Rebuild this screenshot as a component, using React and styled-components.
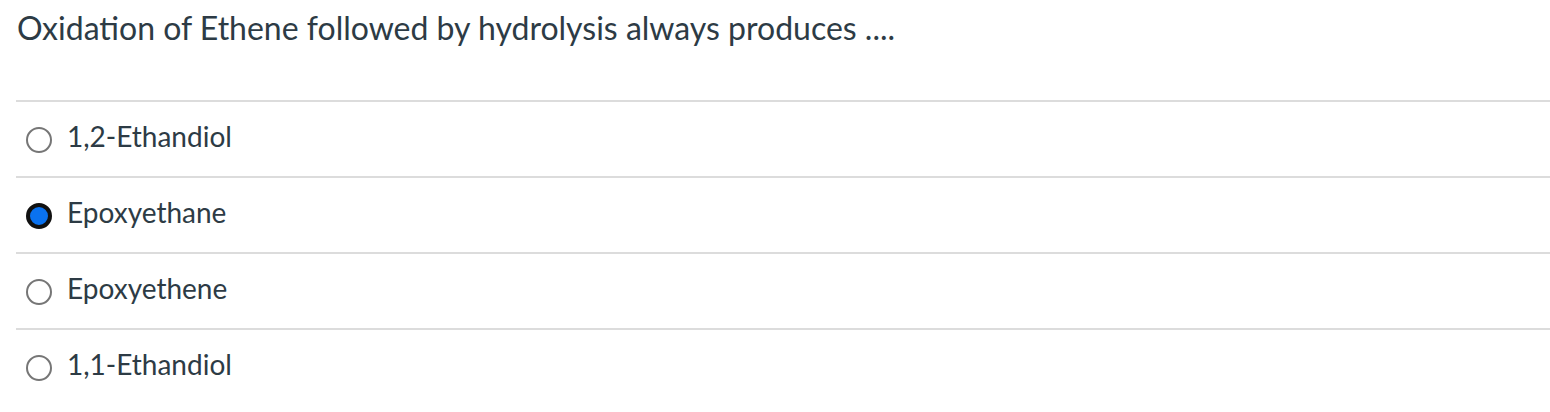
import styled, { createGlobalStyle } from 'styled-components'

const GlobalStyle = createGlobalStyle`
  body {
    margin: 0;
    background: #fff;
    font-family: Lato, "Open Sans", sans-serif;
    color: #2d3b45;
  }
`

const Page = styled.div`
  padding-left: 16px;
`

const Question = styled.div`
  font-size: 32px;
  line-height: 36px;
  padding: 10px 0 0 1px;
  height: 100px;
  box-sizing: border-box;
`

const Answers = styled.div`
  display: flex;
  flex-direction: column;
`

const Answer = styled.label`
  display: flex;
  align-items: center;
  height: 76px;
  border-top: 2px solid #dcdcdc;
  box-sizing: border-box;
  padding-left: 10px;
  font-size: 28px;
  gap: 15px;
`

const Radio = styled.span`
  width: 26px;
  height: 26px;
  border-radius: 50%;
  box-sizing: border-box;
  margin-top: 2px;
  border: ${p => (p.checked ? '4px solid #111' : '2px solid #767676')};
  background: ${p => (p.checked ? '#0a72f0' : '#fff')};
`

const Label = styled.span`
  padding-bottom: 6px;
`

const answers = [
  { text: '1,2-Ethandiol' },
  { text: 'Epoxyethane', checked: true },
  { text: 'Epoxyethene' },
  { text: '1,1-Ethandiol' },
]

const App = () => {
  return (
    <Page>
      <GlobalStyle />
      <Question>Oxidation of Ethene followed by hydrolysis always produces ....</Question>
      <Answers>
        {answers.map(a => (
          <Answer key={a.text}>
            <Radio checked={a.checked} />
            <Label>{a.text}</Label>
          </Answer>
        ))}
      </Answers>
    </Page>
  )
}

export default App
